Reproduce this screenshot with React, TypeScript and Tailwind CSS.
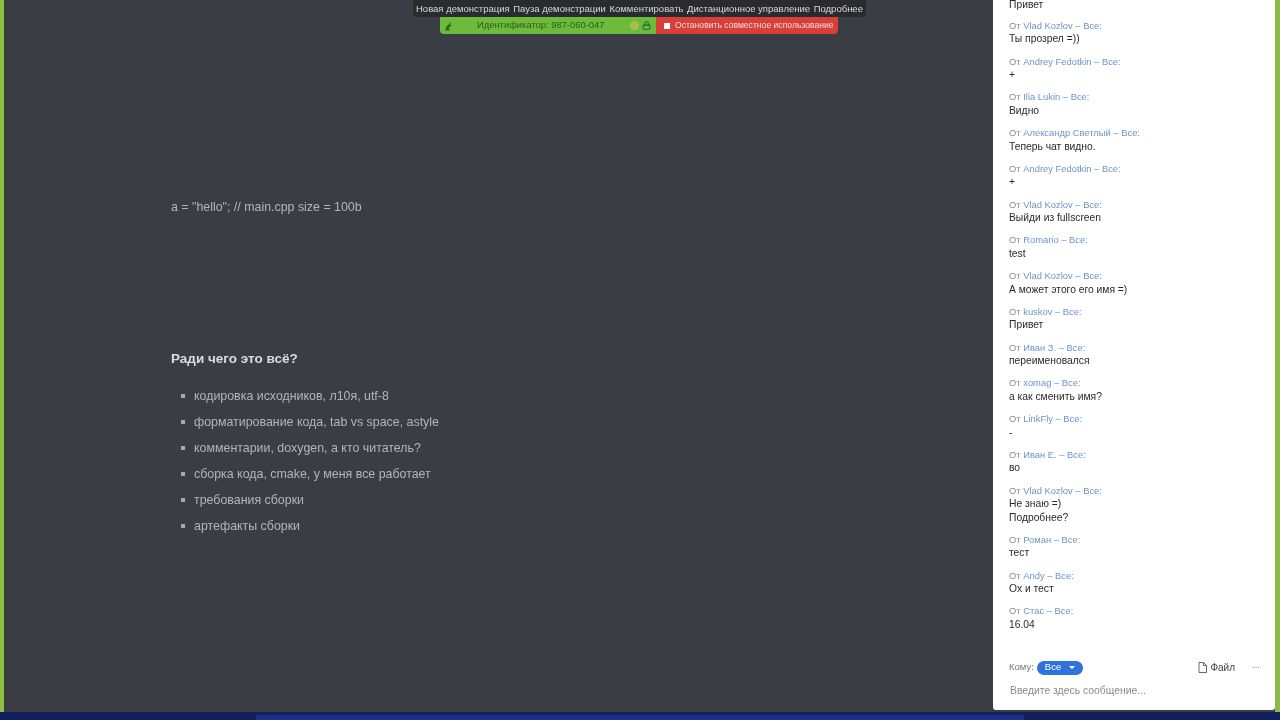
import { Lock } from "lucide-react";

const messages = [
  { from: "Vlad Kozlov", text: ["Ты прозрел =))"] },
  { from: "Andrey Fedotkin", text: ["+"] },
  { from: "Ilia Lukin", text: ["Видно"] },
  { from: "Александр Светлый", text: ["Теперь чат видно."] },
  { from: "Andrey Fedotkin", text: ["+"] },
  { from: "Vlad Kozlov", text: ["Выйди из fullscreen"] },
  { from: "Romario", text: ["test"] },
  { from: "Vlad Kozlov", text: ["А может этого его имя =)"] },
  { from: "kuskov", text: ["Привет"] },
  { from: "Иван З.", text: ["переименовался"] },
  { from: "xomag", text: ["а как сменить имя?"] },
  { from: "LinkFly", text: ["-"] },
  { from: "Иван Е.", text: ["во"] },
  { from: "Vlad Kozlov", text: ["Не знаю =)", "Подробнее?"] },
  { from: "Роман", text: ["тест"] },
  { from: "Andy", text: ["Ох и тест"] },
  { from: "Стас", text: ["16.04"] },
];

const topics = [
  "кодировка исходников, л10я, utf-8",
  "форматирование кода, tab vs space, astyle",
  "комментарии, doxygen, а кто читатель?",
  "сборка кода, cmake, у меня все работает",
  "требования сборки",
  "артефакты сборки",
];

const menu = [
  "Новая демонстрация",
  "Пауза демонстрации",
  "Комментировать",
  "Дистанционное управление",
  "Подробнее",
];

function ShareBar() {
  return (
    <div className="absolute left-[409px] top-0 flex w-[453px] flex-col">
      <div className="flex h-[17px] w-full items-center justify-between rounded-b-[3px] bg-[#2a2b2f] px-[3px] pt-[1px] text-[9.5px] whitespace-nowrap text-[#d8d8d8]">
        {menu.map((item) => (
          <span key={item}>{item}</span>
        ))}
      </div>
      <div className="ml-[27px] flex h-[17px] w-[398px] text-[9.4px] whitespace-nowrap">
        <div className="flex w-[216px] items-center rounded-bl-[4px] bg-[#6dbb3a] pl-[4px] text-[#2f5a22]">
          <svg width="9" height="10" viewBox="0 0 9 10" className="shrink-0 text-[#1f6b2a]">
            <path d="M7.5 0.5 L6 4 L8 4.5 L5 6.5 L5.5 9.5 L1 9.5 L2.5 5.5 Z" fill="currentColor" />
          </svg>
          <span className="ml-[24px]">Идентификатор: 987-060-047</span>
          <span className="ml-[26px] h-[9px] w-[9px] shrink-0 rounded-full border border-[#8fd05a] bg-[#b3b84a]" />
          <Lock size={9} strokeWidth={3} className="ml-[3px] shrink-0 text-[#1f6b2a]" />
        </div>
        <div className="flex flex-1 items-center rounded-br-[4px] bg-[#d83f38] pl-[8px] text-[8.6px] text-[#f7dcda]">
          <span className="h-[6px] w-[6px] shrink-0 bg-white" />
          <span className="ml-[5px]">Остановить совместное использование</span>
        </div>
      </div>
    </div>
  );
}

function Slide() {
  return (
    <main className="relative h-full w-[989px] shrink-0 bg-[#3a3d44] pl-[167px] pt-[200px] text-[12.4px] text-[#b4b5b8]">
      <ShareBar />
      <p className="leading-[15px]">a = "hello"; // main.cpp size = 100b</p>
      <h2 className="mt-[135px] text-[13.5px] leading-[18px] font-bold text-[#dcdcde]">Ради чего это всё?</h2>
      <ul className="mt-[15px]">
        {topics.map((t) => (
          <li key={t} className="flex h-[26px] items-center">
            <span className="ml-[10px] h-[4px] w-[4px] bg-[#a8a9ac]" />
            <span className="ml-[9px]">{t}</span>
          </li>
        ))}
      </ul>
    </main>
  );
}

function Chat() {
  return (
    <aside className="flex h-[710px] w-[282px] shrink-0 flex-col overflow-hidden rounded-b-[3px] bg-white pl-[16px] text-[10.3px]">
      <div className="h-[653px] text-[#2a2a2a]">
        <p className="mb-[9.75px] leading-[9px]">Привет</p>
        {messages.map((m, i) => (
          <div key={i} className="mb-[8.75px] leading-[13.5px]">
            <p className="text-[9.4px]">
              <span className="text-[#8a8a8a]">От </span>
              <span className="text-[#6f94c9]">{m.from} – Все:</span>
            </p>
            {m.text.map((line) => (
              <p key={line}>{line}</p>
            ))}
          </div>
        ))}
      </div>
      <div className="flex items-center pr-[15px] pt-[7px]">
        <span className="text-[9.5px] text-[#777]">Кому:</span>
        <span className="ml-[3px] flex h-[14px] w-[46px] items-center rounded-full bg-[#2d72de] pl-[8px] text-[9.5px] text-white">
          Все
          <span className="ml-[8px] h-0 w-0 border-x-[3px] border-t-[3px] border-x-transparent border-t-white" />
        </span>
        <span className="ml-auto flex items-center text-[10px] text-[#444]">
          <svg width="9" height="11" viewBox="0 0 9 11" fill="none" stroke="#444" strokeWidth="0.8">
            <path d="M1 0.5 H5.5 L8.5 3.5 V10.5 H1 Z M5.5 0.5 V3.5 H8.5" />
          </svg>
          <span className="ml-[3px]">Файл</span>
        </span>
        <span className="ml-[17px] text-[8px] leading-none text-[#666]">···</span>
      </div>
      <p className="mt-[8px] pl-[1px] text-[10.4px] text-[#8a8a8a]">Введите здесь сообщение...</p>
    </aside>
  );
}

export default function App() {
  return (
    <div className="flex h-[720px] w-[1280px] flex-col overflow-hidden bg-[#13205e] font-['Liberation_Sans',sans-serif] blur-[0.3px]">
      <div className="flex h-[712px] bg-[#3a3d44]">
        <div className="w-[4px] shrink-0 bg-[#8fbf3f]" />
        <Slide />
        <Chat />
        <div className="h-full w-[5px] shrink-0 bg-[#8fb84a]" />
      </div>
      <div className="mx-[256px] mt-[3px] h-[5px] bg-[#1c2f86]" />
    </div>
  );
}
